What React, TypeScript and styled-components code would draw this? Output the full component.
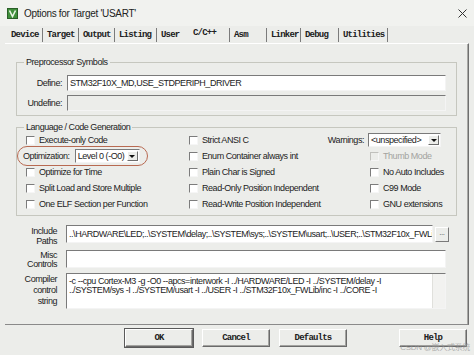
import React from 'react';
import styled, { createGlobalStyle } from 'styled-components';

const GlobalStyle = createGlobalStyle`
  html, body {
    margin: 0;
    padding: 0;
    background: #ecedea;
  }
`;

const Window = styled.div`
  position: relative;
  width: 474px;
  height: 355px;
  overflow: hidden;
  display: flex;
  flex-direction: column;
  background: #ecedea;
  color: #1c1c1c;
  font-family: 'Liberation Sans', Arial, sans-serif;
  font-size: 9px;
  letter-spacing: -0.45px;
`;

const TitleBar = styled.div`
  height: 26px;
  flex: none;
  display: flex;
  align-items: center;
  gap: 6px;
  padding: 0 7px;
  background: #f1f2ef;
`;

const TitleText = styled.span`
  font-size: 10px;
  letter-spacing: -0.3px;
  color: #222;
`;

const CloseBtn = styled.span`
  margin-left: auto;
  display: flex;
`;

const TabStrip = styled.div`
  height: 17px;
  flex: none;
  display: flex;
  padding-left: 7px;
`;

const Tab = styled.div<{ $w: number; $sep: boolean; $active?: boolean }>`
  width: ${p => p.$w}px;
  box-sizing: border-box;
  height: 14px;
  margin-top: 2px;
  padding-left: ${p => (p.$active ? 7 : 4)}px;
  padding-bottom: ${p => (p.$active ? 3 : 0)}px;
  line-height: ${p => (p.$active ? 11 : 14)}px;
  border-right: 1px solid ${p => (p.$sep ? '#7b7b7b' : 'transparent')};
  font-family: 'Liberation Mono', 'Courier New', monospace;
  font-weight: bold;
  font-size: 9px;
  letter-spacing: -0.8px;
  color: #202020;
  white-space: nowrap;
`;

const Panel = styled.div`
  height: 282px;
  flex: none;
  box-sizing: border-box;
  margin: 0 5px;
  padding: 13px 11px 0 11px;
  border-top: 1px solid #ffffff;
  border-right: 1px solid #6f6f6f;
  border-bottom: 1px solid #8a8a8a;
  box-shadow: inset -1px 0 0 #a9a9a6;
  display: flex;
  flex-direction: column;
`;

const Group = styled.fieldset<{ $gap?: number }>`
  margin: ${p => p.$gap ?? 0}px 0 0 0;
  padding: 0;
  min-width: 0;
  border: 1px solid #c6c7bf;
`;

const Legend = styled.legend`
  margin-left: 7px;
  padding: 0 2px;
  line-height: 10px;
  font-size: 9px;
  color: #222;
`;

const SymbolGrid = styled.div`
  display: grid;
  grid-template-columns: 45px minmax(0, 1fr);
  column-gap: 5px;
  row-gap: 4px;
  padding: 8px 10px 4px 0;
`;

const FieldLabel = styled.span`
  text-align: right;
  align-self: center;
  white-space: nowrap;
`;

const TextBox = styled.div<{ $disabled?: boolean; $h?: number; $grow?: boolean }>`
  height: ${p => p.$h ?? 16}px;
  min-width: 0;
  flex: ${p => (p.$grow ? '1 1 0' : 'none')};
  box-sizing: border-box;
  display: flex;
  align-items: center;
  padding: 0 2px;
  background: ${p => (p.$disabled ? '#ecedea' : '#ffffff')};
  border-top: 1px solid #7a7a7a;
  border-left: 1px solid #7a7a7a;
  border-right: 1px solid #f4f4f4;
  border-bottom: 1px solid #f4f4f4;
  overflow: hidden;
  white-space: nowrap;
`;

const LangGrid = styled.div`
  display: grid;
  grid-template-columns: 163px 136px minmax(0, 1fr);
  grid-auto-rows: 16px;
  padding: 0 15px 3px 6px;
`;

const Cell = styled.div<{ $indent?: number; $end?: boolean; $muted?: boolean }>`
  display: flex;
  align-items: center;
  gap: 4px;
  padding-left: ${p => p.$indent ?? 0}px;
  justify-content: ${p => (p.$end ? 'flex-end' : 'flex-start')};
  color: ${p => (p.$muted ? '#a3a3a0' : 'inherit')};
  white-space: nowrap;
`;

const Check = styled.span<{ $disabled?: boolean }>`
  width: 9px;
  height: 9px;
  box-sizing: border-box;
  flex: none;
  background: ${p => (p.$disabled ? '#ecedea' : '#ffffff')};
  border-top: 1px solid ${p => (p.$disabled ? '#c0c0bc' : '#7c7c7c')};
  border-left: 1px solid ${p => (p.$disabled ? '#c0c0bc' : '#7c7c7c')};
  border-right: 1px solid #f6f6f6;
  border-bottom: 1px solid #f6f6f6;
`;

const Highlight = styled.div`
  position: relative;
  display: flex;
  align-items: center;
  gap: 5px;
  &::after {
    content: '';
    position: absolute;
    left: -6px;
    right: -8px;
    top: -3px;
    bottom: -3px;
    border: 1.5px solid #b86a52;
    border-radius: 11px;
    pointer-events: none;
  }
`;

const Select = styled.div<{ $w: number }>`
  width: ${p => p.$w}px;
  height: 14px;
  box-sizing: border-box;
  display: flex;
  align-items: center;
  background: #ffffff;
  border-top: 1px solid #7a7a7a;
  border-left: 1px solid #7a7a7a;
  border-right: 1px solid #f4f4f4;
  border-bottom: 1px solid #f4f4f4;
`;

const SelectValue = styled.span`
  flex: 1;
  padding-left: 2px;
  overflow: hidden;
`;

const SelectArrow = styled.span`
  width: 11px;
  height: 10px;
  margin-right: 1px;
  box-sizing: border-box;
  display: flex;
  align-items: center;
  justify-content: center;
  background: #ecedea;
  border-top: 1px solid #fff;
  border-left: 1px solid #fff;
  border-right: 1px solid #6d6d6d;
  border-bottom: 1px solid #6d6d6d;
  &::before {
    content: '';
    border-left: 3px solid transparent;
    border-right: 3px solid transparent;
    border-top: 3px solid #111;
  }
`;

const PathGrid = styled.div`
  display: grid;
  grid-template-columns: 41px minmax(0, 1fr);
  column-gap: 9px;
  row-gap: 4px;
  margin-top: 9px;
  padding-right: 11px;
`;

const StackLabel = styled.span<{ $lh?: number }>`
  text-align: right;
  line-height: ${p => p.$lh ?? 10}px;
  padding-top: 1px;
`;

const PathRow = styled.div`
  display: flex;
  min-width: 0;
  gap: 2px;
  margin-right: -3px;
`;

const DotsButton = styled.span`
  width: 14px;
  height: 15px;
  margin-top: 2px;
  box-sizing: border-box;
  flex: none;
  text-align: center;
  line-height: 9px;
  font-size: 8px;
  background: #ecedea;
  border-top: 1px solid #fff;
  border-left: 1px solid #fff;
  border-right: 1px solid #7a7a7a;
  border-bottom: 1px solid #7a7a7a;
  color: #555;
`;

const ControlArea = styled.div`
  height: 36px;
  min-width: 0;
  box-sizing: border-box;
  display: flex;
  background: #ffffff;
  border-top: 1px solid #7a7a7a;
  border-left: 1px solid #7a7a7a;
  border-right: 1px solid #f4f4f4;
  border-bottom: 1px solid #f4f4f4;
`;

const ControlText = styled.div`
  flex: 1 1 0;
  min-width: 0;
  padding: 3px 2px 0;
  line-height: 9px;
  white-space: nowrap;
  overflow: hidden;
`;

const ScrollStrip = styled.div`
  width: 12px;
  flex: none;
  background: #f2f2f0;
  border-left: 1px solid #e0e0dc;
`;

const ButtonBar = styled.div`
  flex: 1;
  display: flex;
  align-items: flex-start;
  gap: 9px;
  padding: 4px 7px 0 125px;
`;

const Button = styled.div<{ $default?: boolean; $push?: boolean }>`
  width: 68px;
  height: 18px;
  box-sizing: border-box;
  margin-left: ${p => (p.$push ? 'auto' : '0')};
  display: flex;
  align-items: center;
  justify-content: center;
  background: #ecedea;
  border-top: 1px solid #ffffff;
  border-left: 1px solid #ffffff;
  border-right: 1px solid #6a6a6a;
  border-bottom: 1px solid #6a6a6a;
  box-shadow: ${p =>
    p.$default ? '0 0 0 1px #5a5a5a, inset -1px -1px 0 #a3a3a0' : 'inset -1px -1px 0 #a3a3a0'};
  font-family: 'Liberation Mono', 'Courier New', monospace;
  font-weight: bold;
  font-size: 9px;
  letter-spacing: -0.8px;
  color: #202020;
`;

const Watermark = styled.span`
  position: absolute;
  right: 4px;
  bottom: 3px;
  font-family: 'Liberation Sans', 'Noto Sans CJK SC', sans-serif;
  font-size: 8px;
  letter-spacing: -0.3px;
  color: rgba(150, 150, 150, 0.75);
`;

const tabs = [
  { label: 'Device', w: 36, sep: true },
  { label: 'Target', w: 36, sep: true },
  { label: 'Output', w: 36, sep: true },
  { label: 'Listing', w: 42, sep: true },
  { label: 'User', w: 29, sep: false },
  { label: 'C/C++', w: 44, sep: true, active: true },
  { label: 'Asm', w: 37, sep: true },
  { label: 'Linker', w: 34, sep: true },
  { label: 'Debug', w: 38, sep: true },
  { label: 'Utilities', w: 49, sep: true },
];

const KeilIcon = () => (
  <svg width="11" height="11" viewBox="0 0 11 11">
    <rect x="0.5" y="0.5" width="10" height="10" fill="#3f8f3a" stroke="#2a5f27" />
    <path d="M2.5 2.5 L5.5 8.5 L8.5 2.5" fill="none" stroke="#e8f5e4" strokeWidth="1.6" />
  </svg>
);

const CloseIcon = () => (
  <svg width="9" height="9" viewBox="0 0 9 9">
    <path d="M0.5 0.5 L8.5 8.5 M8.5 0.5 L0.5 8.5" stroke="#333" strokeWidth="1" />
  </svg>
);

const CheckItem = ({ label, indent, disabled }: { label: string; indent?: number; disabled?: boolean }) => (
  <Cell $indent={indent} $muted={disabled}>
    <Check $disabled={disabled} />
    <span>{label}</span>
  </Cell>
);

const App = () => {
  return (
    <Window>
      <GlobalStyle />
      <TitleBar>
        <KeilIcon />
        <TitleText>Options for Target 'USART'</TitleText>
        <CloseBtn>
          <CloseIcon />
        </CloseBtn>
      </TitleBar>

      <TabStrip>
        {tabs.map(t => (
          <Tab key={t.label} $w={t.w} $sep={t.sep} $active={t.active}>
            {t.label}
          </Tab>
        ))}
      </TabStrip>

      <Panel>
        <Group>
          <Legend>Preprocessor Symbols</Legend>
          <SymbolGrid>
            <FieldLabel>Define:</FieldLabel>
            <TextBox>STM32F10X_MD,USE_STDPERIPH_DRIVER</TextBox>
            <FieldLabel>Undefine:</FieldLabel>
            <TextBox $disabled />
          </SymbolGrid>
        </Group>

        <Group $gap={6}>
          <Legend>Language / Code Generation</Legend>
          <LangGrid>
            <CheckItem label="Execute-only Code" indent={3} />
            <CheckItem label="Strict ANSI C" indent={3} />
            <Cell $end>
              <span>Warnings:</span>
              <Select $w={73}>
                <SelectValue>&lt;unspecified&gt;</SelectValue>
                <SelectArrow />
              </Select>
            </Cell>

            <Cell>
              <Highlight>
                <span>Optimization:</span>
                <Select $w={65}>
                  <SelectValue>Level 0 (-O0)</SelectValue>
                  <SelectArrow />
                </Select>
              </Highlight>
            </Cell>
            <CheckItem label="Enum Container always int" indent={3} />
            <CheckItem label="Thumb Mode" indent={48} disabled />

            <CheckItem label="Optimize for Time" indent={3} />
            <CheckItem label="Plain Char is Signed" indent={3} />
            <CheckItem label="No Auto Includes" indent={48} />

            <CheckItem label="Split Load and Store Multiple" indent={3} />
            <CheckItem label="Read-Only Position Independent" indent={3} />
            <CheckItem label="C99 Mode" indent={48} />

            <CheckItem label="One ELF Section per Function" indent={3} />
            <CheckItem label="Read-Write Position Independent" indent={3} />
            <CheckItem label="GNU extensions" indent={48} />
          </LangGrid>
        </Group>

        <PathGrid>
          <StackLabel>
            Include
            <br />
            Paths
          </StackLabel>
          <PathRow>
            <TextBox $h={18} $grow>
              ..\HARDWARE\LED;..\SYSTEM\delay;..\SYSTEM\sys;..\SYSTEM\usart;..\USER;..\STM32F10x_FWLib\inc;..\CORE
            </TextBox>
            <DotsButton>...</DotsButton>
          </PathRow>

          <StackLabel $lh={9}>
            Misc
            <br />
            Controls
          </StackLabel>
          <TextBox $h={18} />

          <StackLabel $lh={11}>
            Compiler
            <br />
            control
            <br />
            string
          </StackLabel>
          <ControlArea>
            <ControlText>
              -c --cpu Cortex-M3 -g -O0 --apcs=interwork -I ../HARDWARE/LED -I ../SYSTEM/delay -I
              <br />
              ../SYSTEM/sys -I ../SYSTEM/usart -I ../USER -I ../STM32F10x_FWLib/inc -I ../CORE -I
            </ControlText>
            <ScrollStrip />
          </ControlArea>
        </PathGrid>
      </Panel>

      <ButtonBar>
        <Button $default>OK</Button>
        <Button>Cancel</Button>
        <Button>Defaults</Button>
        <Button $push>Help</Button>
      </ButtonBar>
      <Watermark>CSDN @嵌入式系统</Watermark>
    </Window>
  );
};

export default App;
